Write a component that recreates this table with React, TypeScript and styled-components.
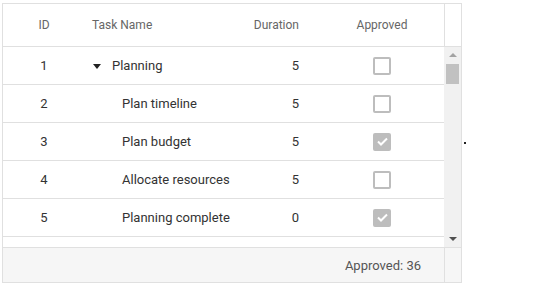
import * as React from "react";
import styled, { createGlobalStyle } from "styled-components";

const GlobalStyle = createGlobalStyle`
    body {
        margin: 0;
        background: #fff;
        font-family: Roboto, "Liberation Sans", sans-serif;
    }
`

const COLUMNS = "82px 145px 77px 137px";

const Page = styled.div`
    position: relative;
    padding: 3px 0 0 2px;
`
const Grid = styled.div`
    width: 460px;
    border: 1px solid #e0e0e0;
    box-sizing: border-box;
    background: #fff;
`
const HeaderBar = styled.div`
    display: flex;
    height: 43px;
    border-bottom: 1px solid #e0e0e0;
    box-sizing: border-box;
`
const Columns = styled.div`
    display: grid;
    grid-template-columns: ${COLUMNS};
    width: 441px;
`
const HeaderCell = styled.div<{ align: string; pad?: string }>`
    display: flex;
    align-items: center;
    justify-content: ${({ align }) => align};
    padding: ${({ pad }) => pad || "0"};
    font-size: 12px;
    color: #666;
`
const ScrollSpacer = styled.div`
    width: 16px;
    border-left: 1px solid #e0e0e0;
`
const Body = styled.div`
    display: flex;
    height: 200px;
`
const Rows = styled.div`
    width: 441px;
    overflow: hidden;
`
const Row = styled.div`
    display: grid;
    grid-template-columns: ${COLUMNS};
    height: 38px;
    border-bottom: 1px solid #e0e0e0;
    box-sizing: border-box;
`
const Cell = styled.div<{ align: string; pad?: string }>`
    display: flex;
    align-items: center;
    justify-content: ${({ align }) => align};
    padding: ${({ pad }) => pad || "0"};
    font-size: 13px;
    color: #333;
    white-space: nowrap;
`
const Expander = styled.span`
    display: inline-block;
    width: 20px;
    &::before {
        content: "";
        display: block;
        margin: 1px 0 0 1px;
        width: 0;
        height: 0;
        border-left: 4px solid transparent;
        border-right: 4px solid transparent;
        border-top: 5px solid #222;
    }
`
const CheckBox = styled.span<{ checked: boolean }>`
    display: flex;
    align-items: center;
    justify-content: center;
    width: 18px;
    height: 18px;
    box-sizing: border-box;
    border: 2px solid #bdbdbd;
    border-radius: 2px;
    background: ${({ checked }) => (checked ? "#bdbdbd" : "#fff")};
`
const ScrollBar = styled.div`
    display: flex;
    flex-direction: column;
    width: 17px;
    background: #f1f1f1;
`
const ScrollButton = styled.div<{ down?: boolean }>`
    display: flex;
    align-items: center;
    justify-content: center;
    height: 16px;
    margin-top: ${({ down }) => (down ? "auto" : "0")};
    &::before {
        content: "";
        width: 0;
        height: 0;
        border-left: 4px solid transparent;
        border-right: 4px solid transparent;
        ${({ down }) =>
            down ? "border-top: 4px solid #505050;" : "border-bottom: 4px solid #a3a3a3;"}
    }
`
const Thumb = styled.div`
    height: 20px;
    margin: 1px 2px 0 2px;
    background: #c1c1c1;
`
const Footer = styled.div`
    display: flex;
    height: 35px;
    border-top: 1px solid #e0e0e0;
    box-sizing: border-box;
    background: #f6f6f6;
`
const FooterText = styled.div`
    width: 441px;
    display: flex;
    align-items: center;
    justify-content: flex-end;
    padding-right: 23px;
    box-sizing: border-box;
    font-size: 13px;
    color: #555;
`
const Dot = styled.div`
    position: absolute;
    left: 464px;
    top: 142px;
    width: 2px;
    height: 2px;
    background: #222;
`

interface Task {
    id: number;
    name: string;
    duration: number;
    approved: boolean;
    parent?: boolean;
}

const tasks: Task[] = [
    { id: 1, name: "Planning", duration: 5, approved: false, parent: true },
    { id: 2, name: "Plan timeline", duration: 5, approved: false },
    { id: 3, name: "Plan budget", duration: 5, approved: true },
    { id: 4, name: "Allocate resources", duration: 5, approved: false },
    { id: 5, name: "Planning complete", duration: 0, approved: true },
];

const Check = () => (
    <svg width="11" height="9" viewBox="0 0 11 9">
        <path d="M1 4.5 L4 7.5 L10 1.5" fill="none" stroke="#fff" strokeWidth="2" />
    </svg>
);

export default function App() {
    return (
        <Page>
            <GlobalStyle />
            <Grid>
                <HeaderBar>
                    <Columns>
                        <HeaderCell align="center">ID</HeaderCell>
                        <HeaderCell align="flex-start" pad="0 0 0 7px">Task Name</HeaderCell>
                        <HeaderCell align="flex-end" pad="0 8px 0 0">Duration</HeaderCell>
                        <HeaderCell align="center" pad="0 0 0 13px">Approved</HeaderCell>
                    </Columns>
                    <ScrollSpacer />
                </HeaderBar>
                <Body>
                    <Rows>
                        {tasks.map((t) => (
                            <Row key={t.id}>
                                <Cell align="center">{t.id}</Cell>
                                <Cell align="flex-start" pad={t.parent ? "0 0 0 7px" : "0 0 0 37px"}>
                                    {t.parent && <Expander />}
                                    {t.name}
                                </Cell>
                                <Cell align="flex-end" pad="0 8px 0 0">{t.duration}</Cell>
                                <Cell align="center" pad="0 0 0 13px">
                                    <CheckBox checked={t.approved}>{t.approved && <Check />}</CheckBox>
                                </Cell>
                            </Row>
                        ))}
                        {/* next row, scrolled out of view */}
                        <Row />
                    </Rows>
                    <ScrollBar>
                        <ScrollButton />
                        <Thumb />
                        <ScrollButton down />
                    </ScrollBar>
                </Body>
                <Footer>
                    <FooterText>Approved: 36</FooterText>
                    <ScrollSpacer />
                </Footer>
            </Grid>
            <Dot />
        </Page>
    );
}
